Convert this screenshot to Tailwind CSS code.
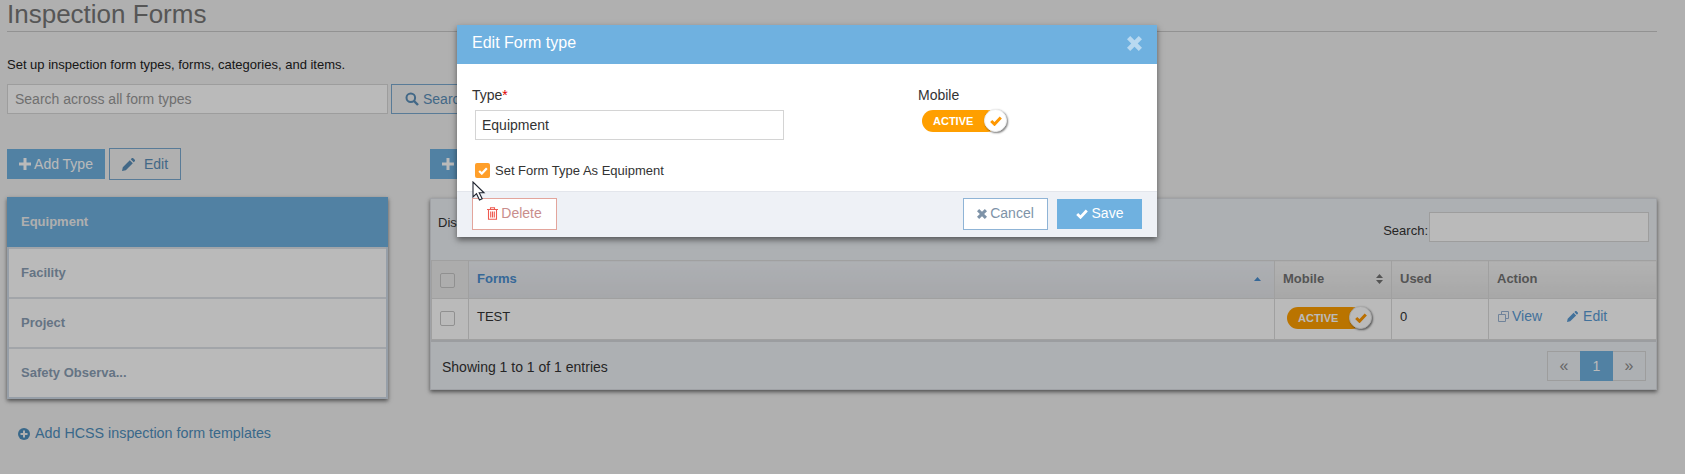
<!DOCTYPE html>
<html>
<head>
<meta charset="utf-8">
<script src="https://cdn.jsdelivr.net/npm/@tailwindcss/browser@4"></script>
</head>
<body class="m-0 overflow-hidden font-['Liberation_Sans',Arial,sans-serif]">
<div class="relative h-[474px] w-[1685px] overflow-hidden bg-[#f1f1f1] pl-[7px] pr-[28px] text-[#333]">
  <!-- page -->
  <div class="h-[33px] border-b border-[#c8c8c8]">
    <h1 class="text-[26px] leading-[30px] -mt-[1px] font-normal text-[#767676]">Inspection Forms</h1>
  </div>
  <p class="mt-[25px] h-[15px] text-[13px] leading-[15px] text-[#222]">Set up inspection form types, forms, categories, and items.</p>
  <div class="mt-[12px] flex gap-[3px]">
    <input class="h-[30px] w-[381px] border border-[#d8d8d8] bg-white px-[7px] text-[14px] placeholder:text-[#999]" placeholder="Search across all form types">
    <button class="flex h-[30px] w-[100px] items-center gap-[4px] border border-[#7ba9cf] px-[13px] text-[14px] text-[#5b8fb9]">
      <svg class="h-[14px] w-[14px]" viewBox="0 0 14 14" fill="none" stroke="currentColor" stroke-width="2"><circle cx="5.8" cy="5.8" r="4.3"/><path d="M9 9l4 4" stroke-width="2.4"/></svg>
      Search
    </button>
  </div>
  <div class="mt-[34px] flex gap-[42px]">
    <!-- left -->
    <div class="w-[381px]">
      <div class="flex h-[32px] items-center gap-[4px]">
        <button class="flex h-[30px] w-[98px] items-center justify-center gap-[3px] bg-[#6fb1e0] text-[14px] text-white">
          <svg class="h-[12px] w-[12px]" viewBox="0 0 12 12" fill="currentColor"><path d="M4.5 0h3v4.5H12v3H7.5V12h-3V7.5H0v-3h4.5z"/></svg>
          Add Type
        </button>
        <button class="flex h-[32px] w-[72px] items-center justify-center gap-[9px] border border-[#7ba9cf] text-[14px] text-[#5b8fb9]">
          <svg class="h-[13px] w-[13px]" viewBox="0 0 13 13" fill="currentColor"><path d="M0 13l.8-3.8 7-7 3 3-7 7zM8.7 1.3L10 0q.5-.3 1 0l2 2q.3.5 0 1l-1.300 1.300z"/></svg>
          Edit
        </button>
      </div>
      <ul class="mt-[17px] border-2 border-[#d0dbe6] bg-white text-[13px] font-bold text-[#8ba0b5] shadow-[0_2px_4px_rgba(0,0,0,0.55)]">
        <li class="-mx-[2px] -mt-[2px] flex h-[50px] items-center bg-[#6fb1e0] pl-[13px] text-[#f0f0f0]"><span class="pl-[1px]">Equipment</span></li>
        <li class="flex h-[50px] items-center border-t-[2px] border-[#dfe3e8] pl-[12px]">Facility</li>
        <li class="flex h-[50px] items-center border-t-[2px] border-[#dfe3e8] pl-[12px]">Project</li>
        <li class="flex h-[50px] items-center border-t-[2px] border-[#dfe3e8] pl-[12px]">Safety Observa...</li>
      </ul>
      <a class="mt-[24px] flex items-center gap-[5px] pl-[11px] text-[14.3px] text-[#4f8fbd]">
        <svg class="h-[12px] w-[12px]" viewBox="0 0 12 12"><circle cx="6" cy="6" r="6" fill="currentColor"/><path d="M5 2.500h2V5h2.500v2H7v2.500H5V7H2.500V5H5z" fill="#f1f1f1"/></svg>
        Add HCSS inspection form templates
      </a>
    </div>
    <!-- right -->
    <div class="w-[1227px]">
      <div class="flex h-[32px] items-center">
        <button class="flex h-[30px] w-[100px] items-center gap-[3px] bg-[#6fb1e0] pl-[12px] text-[14px] text-white">
          <svg class="h-[12px] w-[12px]" viewBox="0 0 12 12" fill="currentColor"><path d="M4.5 0h3v4.5H12v3H7.5V12h-3V7.5H0v-3h4.5z"/></svg>
          Add Form
        </button>
      </div>
      <div class="mt-[18px] h-[192px] border border-[#dcdfe4] bg-[#eef1f6] shadow-[0_2px_4px_rgba(0,0,0,0.55)]">
        <div class="flex h-[61px] items-start justify-between pl-[7px] pr-[7px] text-[13px] text-[#333]">
          <span class="mt-[14px]">Display</span>
          <label class="mt-[13px] flex items-start"><span class="mt-[9px]">Search:</span><input class="ml-[1px] h-[30px] w-[220px] border border-[#d8d8d8] bg-white"></label>
        </div>
        <table class="w-[1225px] table-fixed border-collapse text-[14px]">
          <colgroup><col class="w-[37px]"><col class="w-[806px]"><col class="w-[117px]"><col class="w-[97px]"><col class="w-[168px]"></colgroup>
          <thead>
            <tr class="h-[38px] text-left text-[#747474]">
              <th class="border border-[#dcdcdc] bg-[#ececec]"><span class="ml-[8px] mt-[2px] block h-[15px] w-[15px] rounded-[2px] border border-[#c6c6c6] bg-[#eeeeee]"></span></th>
              <th class="border border-[#dcdcdc] bg-linear-to-b from-[#eef1f6] to-[#e4e6ea] pb-[2px] pl-[8px] pr-[13px] text-[13px] font-bold text-[#4a8fd0]">
                <span class="flex items-center justify-between">Forms<svg class="h-[4px] w-[7px]" viewBox="0 0 7 4" fill="currentColor"><path d="M3.500 0L7 4H0z"/></svg></span>
              </th>
              <th class="border border-[#dcdcdc] bg-linear-to-b from-[#f4f4f4] to-[#e6e6e6] px-[8px] pb-[2px] text-[13px] font-bold">
                <span class="flex items-center justify-between">Mobile<svg class="h-[10px] w-[7px]" viewBox="0 0 7 10" fill="currentColor"><path d="M3.500 0L7 4H0zM3.500 10L7 6H0z"/></svg></span>
              </th>
              <th class="border border-[#dcdcdc] bg-linear-to-b from-[#f4f4f4] to-[#e6e6e6] px-[8px] pb-[2px] text-[13px] font-bold">Used</th>
              <th class="border border-[#dcdcdc] bg-linear-to-b from-[#f4f4f4] to-[#e6e6e6] px-[8px] pb-[2px] text-[13px] font-bold">Action</th>
            </tr>
          </thead>
          <tbody>
            <tr class="h-[41px] bg-white align-top text-[#333]">
              <td class="border border-[#dcdcdc] pt-[12px]"><span class="ml-[8px] block h-[15px] w-[15px] rounded-[2px] border border-[#c6c6c6]"></span></td>
              <td class="border border-[#dcdcdc] pl-[8px] pt-[8px] text-[13px]">TEST</td>
              <td class="border border-[#dcdcdc] pl-[12px] pt-[8px]">
                <span class="relative flex h-[22px] w-[76px] items-center rounded-full bg-[#ff9f00] pl-[11px] text-[11px] font-bold text-white">ACTIVE<span class="absolute -right-[9px] top-[-1px] flex h-[23px] w-[23px] items-center justify-center rounded-full border border-[#e8e8e8] bg-white shadow-[1px_1px_2px_rgba(0,0,0,0.5)]"><svg class="h-[10px] w-[12px]" viewBox="0 0 12 10" fill="none" stroke="#ff9800" stroke-width="3"><path d="M1.200 5l3.300 3.200L10.800 1.500"/></svg></span></span>
              </td>
              <td class="border border-[#dcdcdc] pl-[8px] pt-[8px] text-[13px]">0</td>
              <td class="border border-[#dcdcdc] pl-[9px] pt-[9px] text-[14px] leading-[16px] text-[#5a9bd5]">
                <span class="flex items-center">
                  <svg class="mr-[3px] h-[11px] w-[11px]" viewBox="0 0 11 11" fill="none" stroke="#9ab4d4"><path d="M.5 3.500h7v7h-7zM3.500 3.500v-3h7v7h-3"/></svg>View
                  <svg class="ml-[25px] mr-[5px] h-[11px] w-[11px]" viewBox="0 0 13 13" fill="currentColor"><path d="M0 13l.8-3.800 7-7 3 3-7 7zM8.700 1.300L10 0q.5-.3 1 0l2 2q.3.5 0 1l-1.300 1.300z"/></svg>Edit
                </span>
              </td>
            </tr>
          </tbody>
        </table>
        <div class="flex h-[50px] items-center justify-between border-t-[2px] border-[#d5d8dc] pl-[11px] pr-[10px] text-[14px]">
          <span class="mt-[2px]">Showing 1 to 1 of 1 entries</span>
          <div class="flex h-[30px] border border-[#d8d8d8] text-[14px] text-[#8c8c8c]">
            <span class="flex w-[32px] items-center justify-center text-[16px]">«</span>
            <span class="-my-px flex w-[33px] items-center justify-center bg-[#6fb1e0] text-white">1</span>
            <span class="flex w-[32px] items-center justify-center text-[16px]">»</span>
          </div>
        </div>
      </div>
    </div>
  </div>

  <!-- backdrop -->
  <div class="absolute inset-0 bg-black/27"></div>

  <!-- modal -->
  <div class="absolute left-[457px] top-[25px] flex h-[212px] w-[700px] flex-col bg-white shadow-[0_3px_6px_rgba(0,0,0,0.5)]">
    <div class="flex h-[39px] items-center justify-between bg-[#6fb1e0] pb-[3px] pl-[15px] pr-[15px] text-[16px] text-white">
      <span>Edit Form type</span>
      <svg class="h-[15px] w-[15px] text-[#b9d9f0]" viewBox="0 0 14 14" fill="currentColor"><path d="M3 0L7 4 11 0 14 3 10 7l4 4-3 3-4-4-4 4-3-3 4-4-4-4z"/></svg>
    </div>
    <div class="relative flex-1 text-[14px] text-[#333]">
      <div class="flex pl-[15px] pt-[23px]">
        <div class="w-[446px]">
          <div class="h-[16px] leading-[16px]">Type<span class="text-[#e00000]">*</span></div>
          <input class="ml-[3px] mt-[7px] block h-[30px] w-[309px] border border-[#d4d4d4] px-[6px] text-[14px] text-[#333]" value="Equipment">
          <label class="ml-[3px] mt-[21px] flex items-center gap-[5px] text-[13px]">
            <span class="flex h-[15px] w-[15px] items-center justify-center rounded-[2px] bg-[#ff9f2a]"><svg class="h-[8px] w-[10px]" viewBox="0 0 12 10" fill="none" stroke="white" stroke-width="2.800"><path d="M1.200 5l3.300 3.200L10.800 1.500"/></svg></span>
            Set Form Type As Equipment
          </label>
        </div>
        <div>
          <div class="h-[16px] leading-[16px]">Mobile</div>
          <span class="relative ml-[4px] mt-[7px] flex h-[22px] w-[76px] items-center rounded-full bg-[#ff9f00] pl-[11px] text-[11px] font-bold text-white">ACTIVE<span class="absolute -right-[9px] top-[-1px] flex h-[23px] w-[23px] items-center justify-center rounded-full border border-[#eeeeee] bg-white shadow-[1px_1px_2px_rgba(0,0,0,0.5)]"><svg class="h-[10px] w-[12px]" viewBox="0 0 12 10" fill="none" stroke="#ff9800" stroke-width="3"><path d="M1.200 5l3.300 3.200L10.800 1.500"/></svg></span></span>
        </div>
      </div>
    </div>
    <div class="flex h-[46px] items-center justify-between border-t border-[#e3e6ec] bg-[#eef1f6] pb-[2px] pl-[15px] pr-[15px] text-[14px]">
      <button class="flex h-[32px] w-[85px] items-center justify-center gap-[3px] border border-[#e3a59c] bg-white text-[#c98d8c]">
        <svg class="h-[13px] w-[11px]" viewBox="0 0 11 13" fill="none" stroke="#ee5a50" stroke-width="1.100"><path d="M0 2.500h11M3.500 2.500V.8h4v1.700M1.500 2.500v9.800h8V2.500M3.700 4.500v6M5.500 4.500v6M7.300 4.500v6"/></svg>
        Delete
      </button>
      <div class="flex items-center gap-[9px]">
        <button class="flex h-[32px] w-[85px] items-center justify-center gap-[3px] border border-[#8fb4d6] bg-white text-[#7e93a8]">
          <svg class="h-[10px] w-[10px]" viewBox="0 0 14 14" fill="currentColor"><path d="M3 0L7 4 11 0 14 3 10 7l4 4-3 3-4-4-4 4-3-3 4-4-4-4z"/></svg>
          Cancel
        </button>
        <button class="flex h-[30px] w-[85px] items-center justify-center gap-[4px] bg-[#6fb1e0] text-white">
          <svg class="h-[10px] w-[12px]" viewBox="0 0 12 10" fill="none" stroke="white" stroke-width="2.800"><path d="M1.200 5l3.300 3.200L10.800 1.500"/></svg>
          Save
        </button>
      </div>
    </div>
  </div>

  <!-- pointer -->
  <svg class="absolute left-[472px] top-[181px] h-[20px] w-[14px]" viewBox="0 0 14 20"><path d="M1 1v15l3.500-3.300L7.500 19l2.700-1.200-3-6H12z" fill="white" stroke="#1f2430" stroke-width="1.100"/></svg>
</div>
</body>
</html>
